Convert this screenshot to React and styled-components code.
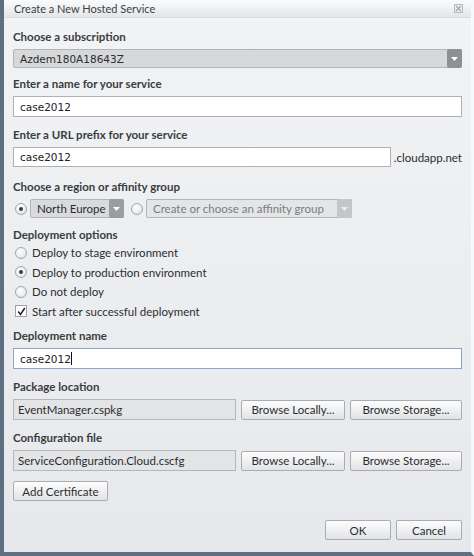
import React from "react";
import styled, { createGlobalStyle } from "styled-components";

const Global = createGlobalStyle`
  html, body { margin: 0; padding: 0; background: #e9ebee; }
  * { box-sizing: border-box; }
`;

const UI_FONT = `"Lato", "Liberation Sans", sans-serif`;
const MONO_FONT = `"DejaVu Sans", "Liberation Sans", sans-serif`;

function CloseIcon() {
    return (
        <svg width="9" height="9" viewBox="0 0 9 9">
            <rect x="0.5" y="0.5" width="8" height="8" fill="none" stroke="#b5b9be" />
            <path d="M2 2 L7 7 M7 2 L2 7" stroke="#9ea3a8" strokeWidth="1.2" />
        </svg>
    );
}

function Seta({ cor = "#fff" }) {
    return (
        <svg width="7" height="4" viewBox="0 0 7 4">
            <path d="M0 0 L7 0 L3.5 4 Z" fill={cor} />
        </svg>
    );
}

function Marca() {
    return (
        <svg width="9" height="9" viewBox="0 0 9 9">
            <path d="M1.2 4.6 L3.5 7.4 L7.8 1" fill="none" stroke="#222" strokeWidth="1.5" />
        </svg>
    );
}

export default function App() {
    return (
        <>
            <Global />
            <Janela>
                <BarraTitulo>
                    <Titulo>Create a New Hosted Service</Titulo>
                    <CloseIcon />
                </BarraTitulo>
                <Corpo>
                    <Secao $margem={9}>
                        <Rotulo>Choose a subscription</Rotulo>
                        <Selecao $largura="100%" $fundo="#d7d8d9" $altura={19}>
                            <TextoSelecao>Azdem180A18643Z</TextoSelecao>
                            <BotaoSeta $fundo="#8e9092"><Seta /></BotaoSeta>
                        </Selecao>
                    </Secao>

                    <Secao $margem={11}>
                        <Rotulo>Enter a name for your service</Rotulo>
                        <Entrada>case2012</Entrada>
                    </Secao>

                    <Secao $margem={13}>
                        <Rotulo>Enter a URL prefix for your service</Rotulo>
                        <Linha>
                            <Entrada $largura="381px" $altura={20}>case2012</Entrada>
                            <Sufixo>.cloudapp.net</Sufixo>
                        </Linha>
                    </Secao>

                    <Secao $margem={10}>
                        <Rotulo>Choose a region or affinity group</Rotulo>
                        <Linha $gap={3}>
                            <Radio $marcado />
                            <Selecao $largura="94px" $fundo="#d9dadb" $altura={19}>
                                <TextoSelecao $fonte={UI_FONT}>North Europe</TextoSelecao>
                                <BotaoSeta $fundo="#9a9c9e"><Seta /></BotaoSeta>
                            </Selecao>
                            <Radio style={{ marginLeft: 4 }} />
                            <Selecao $largura="206px" $fundo="#e4e5e6" $altura={19}>
                                <TextoSelecao $fonte={UI_FONT} $cor="#7a7d80">Create or choose an affinity group</TextoSelecao>
                                <BotaoSeta $fundo="#c4c6c8"><Seta cor="#eceff1" /></BotaoSeta>
                            </Selecao>
                        </Linha>
                    </Secao>

                    <Secao $gap={1} $margem={8}>
                        <Rotulo>Deployment options</Rotulo>
                        <Opcoes>
                            <Opcao><Radio /><TextoOpcao>Deploy to stage environment</TextoOpcao></Opcao>
                            <Opcao><Radio $marcado /><TextoOpcao>Deploy to production environment</TextoOpcao></Opcao>
                            <Opcao><Radio /><TextoOpcao>Do not deploy</TextoOpcao></Opcao>
                            <Opcao><Caixa><Marca /></Caixa><TextoOpcao>Start after successful deployment</TextoOpcao></Opcao>
                        </Opcoes>
                    </Secao>

                    <Secao $margem={11}>
                        <Rotulo>Deployment name</Rotulo>
                        <Entrada $foco>case2012<Cursor /></Entrada>
                    </Secao>

                    <Secao $margem={11}>
                        <Rotulo>Package location</Rotulo>
                        <Linha $gap={5}>
                            <EntradaCinza>EventManager.cspkg</EntradaCinza>
                            <Botao $largura={104}>Browse Locally...</Botao>
                            <Botao $largura={112}>Browse Storage...</Botao>
                        </Linha>
                    </Secao>

                    <Secao $margem={10}>
                        <Rotulo>Configuration file</Rotulo>
                        <Linha $gap={5}>
                            <EntradaCinza>ServiceConfiguration.Cloud.cscfg</EntradaCinza>
                            <Botao $largura={104}>Browse Locally...</Botao>
                            <Botao $largura={112}>Browse Storage...</Botao>
                        </Linha>
                    </Secao>

                    <Botao $largura={95}>Add Certificate</Botao>

                    <Rodape>
                        <Botao $largura={66}>OK</Botao>
                        <Botao $largura={66}>Cancel</Botao>
                    </Rodape>
                </Corpo>
            </Janela>
        </>
    );
}

// ESTILOS

const Janela = styled.div`
    width: 474px;
    height: 556px;
    display: flex;
    flex-direction: column;
    border-left: 4px solid #5e6f82;
    border-bottom: 4px solid #5e6f82;
    border-right: 3px solid #f7f8f9;
    background: linear-gradient(#f1f3f5, #e6e8eb);
    font-family: ${UI_FONT};
    overflow: hidden;
`;

const BarraTitulo = styled.div`
    height: 18px;
    display: flex;
    align-items: center;
    justify-content: space-between;
    padding: 0 8px 0 10px;
    background: linear-gradient(#fbfbfc, #e3e6e9);
    border-bottom: 1px solid #d9dde1;
`;

const Titulo = styled.span`
    font-family: ${UI_FONT};
    font-size: 11px;
    color: #3c3f42;
`;

const Corpo = styled.div`
    flex: 1;
    display: flex;
    flex-direction: column;
    padding: 12px 9px 0 9px;
`;

const Secao = styled.div`
    display: flex;
    flex-direction: column;
    gap: ${p => p.$gap ?? 5}px;
    margin-bottom: ${p => p.$margem ?? 12}px;
`;

const Rotulo = styled.div`
    font-family: ${UI_FONT};
    font-weight: 700;
    font-size: 11.5px;
    line-height: 14px;
    color: #3a3c3f;
`;

const Linha = styled.div`
    display: flex;
    align-items: center;
    gap: ${p => p.$gap ?? 0}px;
`;

const Selecao = styled.div`
    width: ${p => p.$largura};
    height: ${p => p.$altura}px;
    display: flex;
    align-items: center;
    justify-content: space-between;
    background: ${p => p.$fundo};
    border: 1px solid #b3b5b8;
    border-radius: 2px;
    padding-left: 6px;
`;

const TextoSelecao = styled.span`
    font-family: ${p => p.$fonte || MONO_FONT};
    font-size: ${p => (p.$fonte ? "11.5px" : "10.5px")};
    color: ${p => p.$cor || "#2b2d30"};
    white-space: nowrap;
`;

const BotaoSeta = styled.div`
    width: 15px;
    height: calc(100% + 2px);
    margin-right: -1px;
    display: flex;
    align-items: center;
    justify-content: center;
    background: ${p => p.$fundo};
    border-radius: 2px;
`;

const Entrada = styled.div`
    width: ${p => p.$largura || "100%"};
    height: ${p => p.$altura || 21}px;
    display: flex;
    align-items: center;
    background: #fff;
    border: 1px solid ${p => (p.$foco ? "#8ea6c4" : "#aeb1b5")};
    padding-left: 6px;
    font-family: ${MONO_FONT};
    font-size: 10.5px;
    color: #222;
`;

const Cursor = styled.span`
    display: inline-block;
    width: 1px;
    height: 13px;
    background: #111;
`;

const Sufixo = styled.span`
    font-family: ${UI_FONT};
    font-size: 11.5px;
    color: #2b2d30;
    margin-left: 3px;
`;

const Radio = styled.span`
    width: 12px;
    height: 12px;
    flex-shrink: 0;
    border-radius: 50%;
    border: 1px solid #a3a6aa;
    background: radial-gradient(circle at 40% 35%, #ffffff, #dde0e3);
    margin-left: 2px;
    display: flex;
    align-items: center;
    justify-content: center;
    &::after {
        content: "";
        width: 4px;
        height: 4px;
        border-radius: 50%;
        background: ${p => (p.$marcado ? "#3a3d40" : "transparent")};
    }
`;

const Opcoes = styled.div`
    display: flex;
    flex-direction: column;
`;

const Opcao = styled.div`
    height: 19.5px;
    display: flex;
    align-items: center;
    gap: 5px;
`;

const TextoOpcao = styled.span`
    font-family: ${UI_FONT};
    font-size: 11.5px;
    color: #2b2d30;
`;

const Caixa = styled.span`
    width: 12px;
    height: 12px;
    margin-left: 2px;
    border: 1px solid #9ea1a5;
    background: #fff;
    display: flex;
    align-items: center;
    justify-content: center;
`;

const EntradaCinza = styled.div`
    flex: 1;
    height: 21px;
    display: flex;
    align-items: center;
    background: #e3e4e5;
    border: 1px solid #b4b6b9;
    padding-left: 4px;
    font-family: ${UI_FONT};
    font-size: 11.5px;
    color: #2b2d30;
    white-space: nowrap;
    overflow: hidden;
`;

const Botao = styled.button`
    width: ${p => p.$largura}px;
    height: 20px;
    flex-shrink: 0;
    padding: 0;
    background: linear-gradient(#fdfdfd, #e2e3e5);
    border: 1px solid #a9acb0;
    border-radius: 2px;
    font-family: ${UI_FONT};
    font-size: 11.5px;
    color: #2b2d30;
`;

const Rodape = styled.div`
    display: flex;
    justify-content: flex-end;
    gap: 5px;
    margin-top: 19px;
`;
